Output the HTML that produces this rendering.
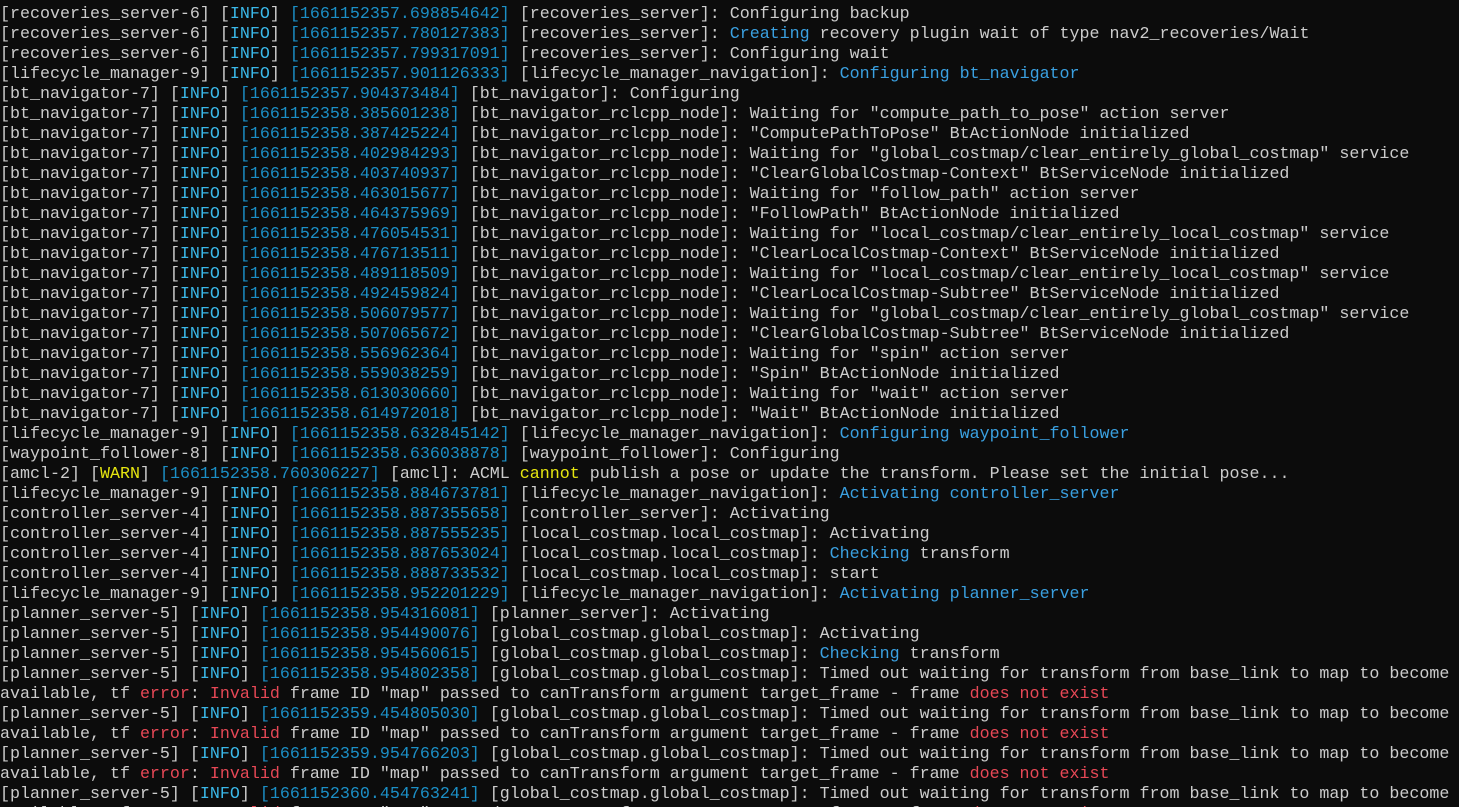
<!DOCTYPE html>
<html><head><meta charset="utf-8"><style>
html,body{margin:0;padding:0;background:#0c0c0c;width:1459px;height:807px;overflow:hidden}
pre{margin:0;padding:5px 0 0 0;font-family:"Liberation Mono",monospace;font-size:16.67px;line-height:20px;color:#cccccc;white-space:pre}
.i{color:#3ab8e8}.t{color:#1b8fc6}.b{color:#3aa0e0}.w{color:#e5e510}.r{color:#e74856}
</style></head><body><pre>[recoveries_server-6] [<span class="i">INFO</span>] <span class="t">[1661152357.698854642]</span> [recoveries_server]: Configuring backup
[recoveries_server-6] [<span class="i">INFO</span>] <span class="t">[1661152357.780127383]</span> [recoveries_server]: <span class="b">Creating</span> recovery plugin wait of type nav2_recoveries/Wait
[recoveries_server-6] [<span class="i">INFO</span>] <span class="t">[1661152357.799317091]</span> [recoveries_server]: Configuring wait
[lifecycle_manager-9] [<span class="i">INFO</span>] <span class="t">[1661152357.901126333]</span> [lifecycle_manager_navigation]: <span class="b">Configuring bt_navigator</span>
[bt_navigator-7] [<span class="i">INFO</span>] <span class="t">[1661152357.904373484]</span> [bt_navigator]: Configuring
[bt_navigator-7] [<span class="i">INFO</span>] <span class="t">[1661152358.385601238]</span> [bt_navigator_rclcpp_node]: Waiting for "compute_path_to_pose" action server
[bt_navigator-7] [<span class="i">INFO</span>] <span class="t">[1661152358.387425224]</span> [bt_navigator_rclcpp_node]: "ComputePathToPose" BtActionNode initialized
[bt_navigator-7] [<span class="i">INFO</span>] <span class="t">[1661152358.402984293]</span> [bt_navigator_rclcpp_node]: Waiting for "global_costmap/clear_entirely_global_costmap" service
[bt_navigator-7] [<span class="i">INFO</span>] <span class="t">[1661152358.403740937]</span> [bt_navigator_rclcpp_node]: "ClearGlobalCostmap-Context" BtServiceNode initialized
[bt_navigator-7] [<span class="i">INFO</span>] <span class="t">[1661152358.463015677]</span> [bt_navigator_rclcpp_node]: Waiting for "follow_path" action server
[bt_navigator-7] [<span class="i">INFO</span>] <span class="t">[1661152358.464375969]</span> [bt_navigator_rclcpp_node]: "FollowPath" BtActionNode initialized
[bt_navigator-7] [<span class="i">INFO</span>] <span class="t">[1661152358.476054531]</span> [bt_navigator_rclcpp_node]: Waiting for "local_costmap/clear_entirely_local_costmap" service
[bt_navigator-7] [<span class="i">INFO</span>] <span class="t">[1661152358.476713511]</span> [bt_navigator_rclcpp_node]: "ClearLocalCostmap-Context" BtServiceNode initialized
[bt_navigator-7] [<span class="i">INFO</span>] <span class="t">[1661152358.489118509]</span> [bt_navigator_rclcpp_node]: Waiting for "local_costmap/clear_entirely_local_costmap" service
[bt_navigator-7] [<span class="i">INFO</span>] <span class="t">[1661152358.492459824]</span> [bt_navigator_rclcpp_node]: "ClearLocalCostmap-Subtree" BtServiceNode initialized
[bt_navigator-7] [<span class="i">INFO</span>] <span class="t">[1661152358.506079577]</span> [bt_navigator_rclcpp_node]: Waiting for "global_costmap/clear_entirely_global_costmap" service
[bt_navigator-7] [<span class="i">INFO</span>] <span class="t">[1661152358.507065672]</span> [bt_navigator_rclcpp_node]: "ClearGlobalCostmap-Subtree" BtServiceNode initialized
[bt_navigator-7] [<span class="i">INFO</span>] <span class="t">[1661152358.556962364]</span> [bt_navigator_rclcpp_node]: Waiting for "spin" action server
[bt_navigator-7] [<span class="i">INFO</span>] <span class="t">[1661152358.559038259]</span> [bt_navigator_rclcpp_node]: "Spin" BtActionNode initialized
[bt_navigator-7] [<span class="i">INFO</span>] <span class="t">[1661152358.613030660]</span> [bt_navigator_rclcpp_node]: Waiting for "wait" action server
[bt_navigator-7] [<span class="i">INFO</span>] <span class="t">[1661152358.614972018]</span> [bt_navigator_rclcpp_node]: "Wait" BtActionNode initialized
[lifecycle_manager-9] [<span class="i">INFO</span>] <span class="t">[1661152358.632845142]</span> [lifecycle_manager_navigation]: <span class="b">Configuring waypoint_follower</span>
[waypoint_follower-8] [<span class="i">INFO</span>] <span class="t">[1661152358.636038878]</span> [waypoint_follower]: Configuring
[amcl-2] [<span class="w">WARN</span>] <span class="t">[1661152358.760306227]</span> [amcl]: ACML <span class="w">cannot</span> publish a pose or update the transform. Please set the initial pose...
[lifecycle_manager-9] [<span class="i">INFO</span>] <span class="t">[1661152358.884673781]</span> [lifecycle_manager_navigation]: <span class="b">Activating controller_server</span>
[controller_server-4] [<span class="i">INFO</span>] <span class="t">[1661152358.887355658]</span> [controller_server]: Activating
[controller_server-4] [<span class="i">INFO</span>] <span class="t">[1661152358.887555235]</span> [local_costmap.local_costmap]: Activating
[controller_server-4] [<span class="i">INFO</span>] <span class="t">[1661152358.887653024]</span> [local_costmap.local_costmap]: <span class="b">Checking</span> transform
[controller_server-4] [<span class="i">INFO</span>] <span class="t">[1661152358.888733532]</span> [local_costmap.local_costmap]: start
[lifecycle_manager-9] [<span class="i">INFO</span>] <span class="t">[1661152358.952201229]</span> [lifecycle_manager_navigation]: <span class="b">Activating planner_server</span>
[planner_server-5] [<span class="i">INFO</span>] <span class="t">[1661152358.954316081]</span> [planner_server]: Activating
[planner_server-5] [<span class="i">INFO</span>] <span class="t">[1661152358.954490076]</span> [global_costmap.global_costmap]: Activating
[planner_server-5] [<span class="i">INFO</span>] <span class="t">[1661152358.954560615]</span> [global_costmap.global_costmap]: <span class="b">Checking</span> transform
[planner_server-5] [<span class="i">INFO</span>] <span class="t">[1661152358.954802358]</span> [global_costmap.global_costmap]: Timed out waiting for transform from base_link to map to become
available, tf <span class="r">error</span>: <span class="r">Invalid</span> frame ID "map" passed to canTransform argument target_frame - frame <span class="r">does not exist</span>
[planner_server-5] [<span class="i">INFO</span>] <span class="t">[1661152359.454805030]</span> [global_costmap.global_costmap]: Timed out waiting for transform from base_link to map to become
available, tf <span class="r">error</span>: <span class="r">Invalid</span> frame ID "map" passed to canTransform argument target_frame - frame <span class="r">does not exist</span>
[planner_server-5] [<span class="i">INFO</span>] <span class="t">[1661152359.954766203]</span> [global_costmap.global_costmap]: Timed out waiting for transform from base_link to map to become
available, tf <span class="r">error</span>: <span class="r">Invalid</span> frame ID "map" passed to canTransform argument target_frame - frame <span class="r">does not exist</span>
[planner_server-5] [<span class="i">INFO</span>] <span class="t">[1661152360.454763241]</span> [global_costmap.global_costmap]: Timed out waiting for transform from base_link to map to become
available, tf <span class="r">error</span>: <span class="r">Invalid</span> frame ID "map" passed to canTransform argument target_frame - frame <span class="r">does not exist</span>
</pre></body></html>
